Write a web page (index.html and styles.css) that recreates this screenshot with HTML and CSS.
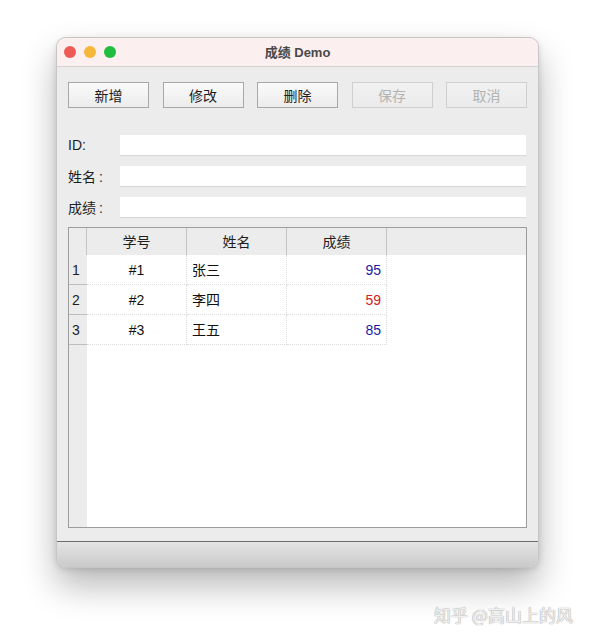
FILE: index.html
```html
<!DOCTYPE html>
<html lang="zh">
<head>
<meta charset="utf-8">
<title>成绩 Demo</title>
<link rel="stylesheet" href="styles.css">
</head>
<body>
<div class="window">
  <div class="titlebar">
    <div class="lights">
      <span class="light red"></span>
      <span class="light yellow"></span>
      <span class="light green"></span>
    </div>
    <div class="title">成绩 Demo</div>
  </div>
  <div class="content">
    <div class="buttons">
      <button class="btn">新增</button>
      <button class="btn">修改</button>
      <button class="btn">删除</button>
      <button class="btn disabled">保存</button>
      <button class="btn disabled">取消</button>
    </div>
    <div class="form">
      <div class="field"><label>ID:</label><div class="input"></div></div>
      <div class="field"><label>姓名<span class="colon">:</span></label><div class="input"></div></div>
      <div class="field"><label>成绩<span class="colon">:</span></label><div class="input"></div></div>
    </div>
    <div class="table">
      <div class="rowheads">
        <div class="corner"></div>
        <div class="rownum">1</div>
        <div class="rownum">2</div>
        <div class="rownum">3</div>
        <div class="rownum last"></div>
      </div>
      <div class="data">
        <div class="head">
          <div class="hc">学号</div>
          <div class="hc">姓名</div>
          <div class="hc">成绩</div>
          <div class="hc rest"></div>
        </div>
        <div class="row">
          <div class="c center">#1</div>
          <div class="c left">张三</div>
          <div class="c right blue">95</div>
        </div>
        <div class="row">
          <div class="c center">#2</div>
          <div class="c left">李四</div>
          <div class="c right red-t">59</div>
        </div>
        <div class="row">
          <div class="c center">#3</div>
          <div class="c left">王五</div>
          <div class="c right blue">85</div>
        </div>
      </div>
    </div>
  </div>
  <div class="statusbar"></div>
</div>
<div class="watermark">知乎 @高山上的风</div>
</body>
</html>
```
FILE: styles.css
```css
html, body {
  margin: 0;
  padding: 0;
  background: #ffffff;
}
body {
  font-family: "Liberation Sans", "Noto Sans CJK SC", sans-serif;
  color: #1e1e1e;
  width: 595px;
  height: 642px;
  overflow: hidden;
  position: relative;
}
.window {
  margin: 37px 0 0 56px;
  width: 483px;
  height: 531px;
  box-sizing: border-box;
  border: 1px solid #c6c6c6;
  border-radius: 10px;
  background: #ececec;
  display: flex;
  flex-direction: column;
  overflow: hidden;
  box-shadow: 0 18px 34px rgba(0,0,0,0.28), 0 2px 6px rgba(0,0,0,0.12);
}
.titlebar {
  height: 28px;
  flex: none;
  background: #fbeff0;
  border-bottom: 1px solid #d2d2d2;
  display: flex;
  align-items: center;
  position: relative;
}
.lights {
  display: flex;
  gap: 8px;
  padding-left: 7px;
}
.light {
  width: 12px;
  height: 12px;
  border-radius: 50%;
  display: block;
}
.light.red { background: #ee5a55; }
.light.yellow { background: #f5b73b; }
.light.green { background: #20bd3f; }
.title {
  position: absolute;
  left: 0;
  right: 0;
  text-align: center;
  font-size: 13px;
  font-weight: bold;
  color: #4b4848;
  top: 4px;
}
.content {
  flex: 1;
  padding: 15px 11px 0 11px;
  display: flex;
  flex-direction: column;
}
.buttons {
  display: flex;
  justify-content: space-between;
  height: 26px;
}
.btn {
  width: 81px;
  height: 26px;
  box-sizing: border-box;
  border: 1px solid #a8a8a8;
  background: linear-gradient(#fafafa, #ececec);
  font-family: "Noto Sans CJK SC", sans-serif;
  font-size: 14px;
  color: #1e1e1e;
  padding: 0;
  line-height: 24px;
}
.btn.disabled {
  border-color: #cfcfcf;
  color: #b3b3b3;
  background: linear-gradient(#f1f1f1, #ebebeb);
}
.form {
  margin-top: 27px;
  display: flex;
  flex-direction: column;
  gap: 11px;
}
.field {
  display: flex;
  align-items: center;
  height: 20px;
}
.field label {
  width: 52px;
  font-family: "Liberation Sans", "Noto Sans CJK SC", sans-serif;
  font-size: 14px;
  color: #1e1e1e;
}
.colon {
  margin-left: 3px;
}
.input {
  flex: 1;
  height: 20px;
  background: #ffffff;
  box-shadow: 0 1px 0 #d6d6d6;
  margin-right: 1px;
}
.table {
  margin-top: 10px;
  height: 301px;
  box-sizing: border-box;
  border: 1px solid #9c9c9c;
  display: flex;
  background: #ffffff;
  font-size: 14px;
}
.rowheads {
  width: 18px;
  background: #ececec;
  display: flex;
  flex-direction: column;
  flex: none;
}
.corner {
  height: 27px;
  flex: none;
  border-right: 1px solid #c4c4c4;
  box-sizing: border-box;
}
.rownum {
  height: 30px;
  flex: none;
  box-sizing: border-box;
  border-bottom: 1px solid #bdbdbd;
  padding-left: 3px;
  line-height: 31px;
  font-family: "Liberation Sans", sans-serif;
  font-size: 14px;
  color: #1e1e1e;
}
.rownum.last {
  border-bottom: none;
}
.data {
  flex: 1;
  display: flex;
  flex-direction: column;
}
.head {
  height: 27px;
  background: #ececec;
  display: flex;
  flex: none;
}
.hc {
  width: 100px;
  box-sizing: border-box;
  border-right: 1px solid #c4c4c4;
  text-align: center;
  line-height: 26px;
  font-family: "Noto Sans CJK SC", sans-serif;
  font-size: 14px;
  color: #1e1e1e;
}
.hc.rest {
  flex: 1;
  border-right: none;
}
.row {
  height: 30px;
  display: flex;
  flex: none;
}
.c {
  width: 100px;
  box-sizing: border-box;
  border-right: 1px dotted #dedede;
  border-bottom: 1px dotted #dedede;
  line-height: 31px;
  padding: 0 5px;
  font-size: 14px;
  color: #111;
}
.center { text-align: center; }
.left { text-align: left; font-family: "Noto Sans CJK SC", sans-serif; line-height: 28px; }
.right { text-align: right; }
.blue { color: #1a1aa8; }
.red-t { color: #d02020; }
.statusbar {
  height: 26px;
  flex: none;
  margin-top: 13px;
  border-top: 1px solid #6e6e6e;
  background: linear-gradient(#e4e4e4, #c9c9c9);
}
.watermark {
  position: absolute;
  left: 434px;
  top: 602px;
  font-family: "Noto Sans CJK SC", sans-serif;
  font-size: 17px;
  color: #f0f0f0;
  text-shadow: 0 0 1px #a8a8a8, 0 0 1px #a8a8a8;
}
```
